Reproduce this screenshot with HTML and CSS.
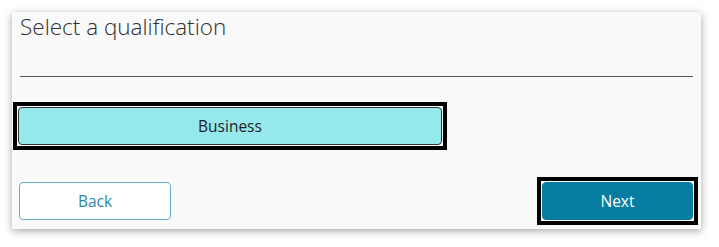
FILE: index.html
```html
<!DOCTYPE html>
<html lang="en">
<head>
<meta charset="utf-8">
<title>Select a qualification</title>
<link rel="stylesheet" href="styles.css">
</head>
<body>
<div class="card">
  <h1 class="title">Select a qualification</h1>
  <div class="rule"></div>
  <div class="options">
    <span class="ring"><button class="btn option">Business</button></span>
  </div>
  <div class="footer">
    <button class="btn back">Back</button>
    <span class="ring"><button class="btn next">Next</button></span>
  </div>
</div>
</body>
</html>
```

FILE: styles.css
```css
html, body {
  margin: 0;
  padding: 0;
  background: #ffffff;
}
body {
  padding: 12px;
  font-family: "Open Sans", "Noto Sans", sans-serif;
}
.card {
  box-sizing: border-box;
  width: 689px;
  height: 217px;
  background: #f9f9f9;
  box-shadow: 0 2px 8px rgba(0, 0, 0, 0.35);
  display: flex;
  flex-direction: column;
  padding: 0 8px 0 7px;
}
.title {
  margin: 0 0 0 1px;
  font-size: 22.5px;
  line-height: 30px;
  font-weight: 300;
  color: #2e2e2e;
}
.rule {
  margin: 34px 0 0 1px;
  height: 1px;
  background: #555555;
}
.options {
  margin-top: 25px;
  display: flex;
}
.ring {
  display: inline-flex;
  border: 4px solid #000000;
  padding: 1px;
  background: #ffffff;
}
.options .ring {
  margin-left: -6px;
}
.btn {
  box-sizing: border-box;
  height: 38px;
  border-radius: 4px;
  font-family: "Open Sans", "Noto Sans", sans-serif;
  font-size: 15.5px;
  padding: 0;
  margin: 0;
}
.option {
  width: 424px;
  background: #95e9ec;
  border: 1px solid #333333;
  color: #1f1f1f;
}
.footer {
  margin-top: 27px;
  display: flex;
  justify-content: space-between;
  align-items: center;
}
.back {
  width: 152px;
  background: #ffffff;
  border: 1px solid #66afc8;
  color: #2f88a8;
}
.next {
  width: 151px;
  background: #077ea1;
  border: 1px solid #0a7a9c;
  color: #ffffff;
}
.footer .ring {
  margin-right: -5px;
}
```
